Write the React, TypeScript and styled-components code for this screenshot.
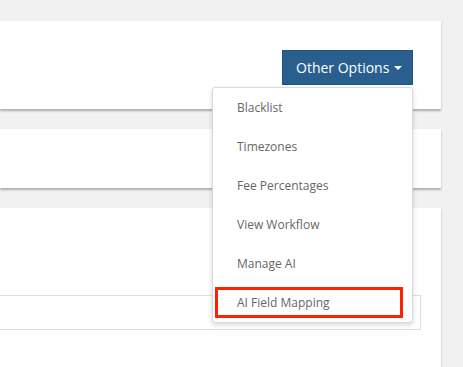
import React from 'react';
import styled, { createGlobalStyle } from 'styled-components';

const GlobalStyle = createGlobalStyle`
    html, body {
        margin: 0;
        padding: 0;
        background: #f1f1f1;
        font-family: 'Open Sans', 'DejaVu Sans', sans-serif;
        overflow: hidden;
    }
`;

const menuItems = [
    'Blacklist',
    'Timezones',
    'Fee Percentages',
    'View Workflow',
    'Manage AI',
    'AI Field Mapping',
];

const App: React.FC = () => {
    return (
        <>
            <GlobalStyle />
            <Page>
                <Panel height={88}>
                    <Toolbar>
                        <DropdownWrap>
                            <OptionsBtn>
                                Other Options <Caret />
                            </OptionsBtn>
                            <Menu>
                                {menuItems.map(item => (
                                    <MenuItem
                                        key={item}
                                        highlighted={item === 'AI Field Mapping'}>
                                        {item}
                                    </MenuItem>
                                ))}
                            </Menu>
                        </DropdownWrap>
                    </Toolbar>
                </Panel>
                <Panel height={59} />
                <Panel height={159}>
                    <FieldRow />
                </Panel>
            </Page>
        </>
    );
};

const Page = styled.div`
    display: flex;
    flex-direction: column;
    gap: 20px;
    padding-top: 21px;
    width: 441px;
`;

const Panel = styled.div<{ height: number }>`
    background: #fff;
    height: ${p => p.height}px;
    box-shadow: 0 2px 2px rgba(0, 0, 0, 0.28);
    box-sizing: border-box;
    position: relative;
`;

const Toolbar = styled.div`
    display: flex;
    justify-content: flex-end;
    padding: 29px 28px 0 0;
`;

const DropdownWrap = styled.div`
    position: relative;
    z-index: 5;
`;

const OptionsBtn = styled.div`
    display: flex;
    align-items: center;
    gap: 5px;
    box-sizing: border-box;
    width: 131px;
    height: 35px;
    padding-left: 13px;
    background: #285f8f;
    border: 1px solid #22547f;
    color: #fff;
    font-size: 14px;
    cursor: pointer;
`;

const Caret = styled.span`
    width: 0;
    height: 0;
    border-left: 4px solid transparent;
    border-right: 4px solid transparent;
    border-top: 4px solid #fff;
    margin-top: 1px;
`;

const Menu = styled.div`
    position: absolute;
    top: 37px;
    right: 0;
    width: 201px;
    box-sizing: border-box;
    background: #fff;
    border: 1px solid #d6d9de;
    border-radius: 3px;
    box-shadow: 0 2px 5px rgba(0, 0, 0, 0.15);
    padding: 0 0 4px;
`;

const MenuItem = styled.div<{ highlighted?: boolean }>`
    height: 39px;
    display: flex;
    align-items: center;
    padding-left: 22px;
    color: #666;
    font-size: 12px;
    box-sizing: border-box;
    margin: 0 2px;
    ${p =>
        p.highlighted &&
        `
        height: 31px;
        margin: 4px 9px 0 2px;
        padding-left: 19px;
        border: 3px solid #ff2200;
    `}
`;

const FieldRow = styled.div`
    position: absolute;
    top: 87px;
    left: 0;
    right: 20px;
    height: 33px;
    border: 1px solid #ddd;
    border-left: none;
`;

export default App;
